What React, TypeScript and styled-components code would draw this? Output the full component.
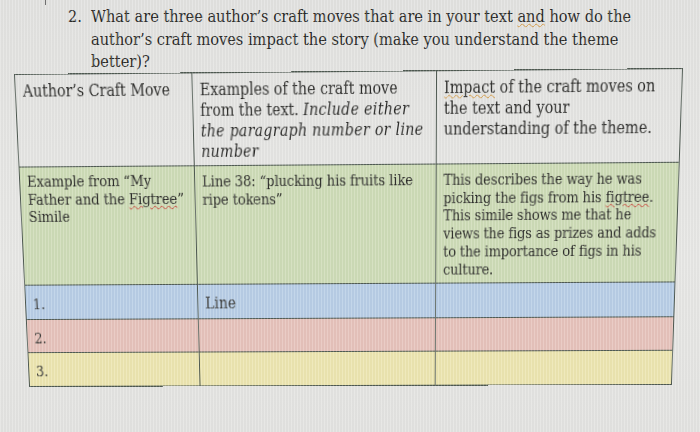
import styled, { createGlobalStyle } from 'styled-components'

// the photo was taken at an angle: the flat table is mapped onto the
// quad seen in the picture with a perspective matrix
const SHEET_TOP = 74
const FLAT = { x: 14, y: 0, w: 669, h: 311 }
const QUAD = [
  [14, 74],
  [683, 68],
  [672, 383],
  [29, 385],
].map(([x, y]) => [x, y - SHEET_TOP])

const perspectiveMatrix = (): string => {
  const [[x0, y0], [x1, y1], [x2, y2], [x3, y3]] = QUAD
  const dx1 = x1 - x2
  const dx2 = x3 - x2
  const dx3 = x0 - x1 + x2 - x3
  const dy1 = y1 - y2
  const dy2 = y3 - y2
  const dy3 = y0 - y1 + y2 - y3
  const den = dx1 * dy2 - dx2 * dy1
  const g = (dx3 * dy2 - dx2 * dy3) / den
  const h = (dx1 * dy3 - dx3 * dy1) / den
  const a = x1 - x0 + g * x1
  const b = x3 - x0 + h * x3
  const d = y1 - y0 + g * y1
  const e = y3 - y0 + h * y3
  const { x, y, w, h: H } = FLAT
  const A = a / w
  const B = b / H
  const C = x0 - (a * x) / w - (b * y) / H
  const D = d / w
  const E = e / H
  const F = y0 - (d * x) / w - (e * y) / H
  const G = g / w
  const Hh = h / H
  const I = 1 - (g * x) / w - (h * y) / H
  return `matrix3d(${A},${D},0,${G},${B},${E},0,${Hh},0,0,1,0,${C},${F},0,${I})`
}

const SERIF = `"DejaVu Serif Condensed", "DejaVu Serif", serif`

const GlobalStyle = createGlobalStyle`
  html, body {
    margin: 0;
    padding: 0;
    background: #e4e4e2;
  }
`

const Page = styled.div`
  position: relative;
  width: 700px;
  height: 432px;
  overflow: hidden;
  background: linear-gradient(180deg, #e2e2e0 0%, #e7e7e5 60%, #e3e3e1 100%);
  font-family: ${SERIF};
  font-stretch: condensed;
  color: #2a2a28;

  /* screen moiré from the photo */
  &::after {
    content: '';
    position: absolute;
    inset: 0;
    pointer-events: none;
    background: repeating-linear-gradient(
      90deg,
      rgba(255, 255, 255, 0.16) 0 1px,
      rgba(0, 0, 0, 0.015) 1px 3px
    );
  }
`

const Tick = styled.span`
  position: absolute;
  left: 45px;
  top: 0;
  width: 1px;
  height: 5px;
  background: #555;
`

const Question = styled.div`
  display: flex;
  padding: 6px 0 0 68px;
  height: 68px;
  font-size: 16.2px;
  line-height: 22.5px;
  white-space: nowrap;
`

const QNum = styled.span`
  width: 23px;
`

const Squiggle = styled.span<{ $tone: 'grammar' | 'spelling' }>`
  text-decoration: underline wavy ${(p) => (p.$tone === 'grammar' ? '#d49a45' : '#c8463a')};
  text-decoration-thickness: 1px;
  text-underline-offset: 1px;
`

const Sheet = styled.div`
  width: 700px;
  transform-origin: 0 0;
  transform: ${perspectiveMatrix()};
`

const Table = styled.div`
  margin-left: 14px;
  width: 669px;
  display: grid;
  grid-template-columns: 179px 245px 1fr;
  grid-template-rows: 90px 118px 35px 34px 34px;
  border: 1px solid #4f5a52;
  box-sizing: border-box;
`

const fills = {
  plain: 'transparent',
  green: '#cedcb7',
  blue: '#b8cee6',
  red: '#e6c3bb',
  yellow: '#ece5b0',
}

type Fill = keyof typeof fills

const Cell = styled.div<{ $fill: Fill; $last?: boolean; $bottom?: boolean }>`
  background: ${(p) => fills[p.$fill]};
  border-right: ${(p) => (p.$last ? 'none' : '1px solid #4f5a52')};
  border-bottom: ${(p) => (p.$bottom ? 'none' : '1px solid #4f5a52')};
  padding: 6px 4px 0 7px;
  white-space: nowrap;
  overflow: hidden;
`

const HeadText = styled.div<{ $size: number }>`
  font-size: ${(p) => p.$size}px;
  line-height: 20px;

  & i {
    letter-spacing: 0.3px;
  }
`

const BodyText = styled.div<{ $size: number }>`
  font-size: ${(p) => p.$size}px;
  line-height: 17.7px;
  letter-spacing: -0.1px;
`

const RowText = styled.div<{ $size: number }>`
  font-size: ${(p) => p.$size}px;
  line-height: 20px;
  padding-top: 3px;
  color: #383836;
`

const rows: { fill: Fill; label: string; example: string }[] = [
  { fill: 'blue', label: '1.', example: 'Line' },
  { fill: 'red', label: '2.', example: '' },
  { fill: 'yellow', label: '3.', example: '' },
]

export default function App(): JSX.Element {
  return (
    <Page>
      <GlobalStyle />
      <Tick />
      <Question>
        <QNum>2.</QNum>
        <div>
          What are three author’s craft moves that are in your text{' '}
          <Squiggle $tone="grammar">and</Squiggle> how do the
          <br />
          author’s craft moves impact the story (make you understand the theme
          <br />
          better)?
        </div>
      </Question>

      <Sheet>
        <Table>
          <Cell $fill="plain">
            <HeadText $size={16}>Author’s Craft Move</HeadText>
          </Cell>
          <Cell $fill="plain">
            <HeadText $size={15.9}>
              Examples of the craft move
              <br />
              from the text. <i>Include either</i>
              <br />
              <i>the paragraph number or line</i>
              <br />
              <i>number</i>
            </HeadText>
          </Cell>
          <Cell $fill="plain" $last>
            <HeadText $size={16}>
              <Squiggle $tone="grammar">Impact</Squiggle> of the craft moves on
              <br />
              the text and your
              <br />
              understanding of the theme.
            </HeadText>
          </Cell>

          <Cell $fill="green">
            <BodyText $size={15}>
              Example from “My
              <br />
              Father and the <Squiggle $tone="spelling">Figtree</Squiggle>”
              <br />
              Simile
            </BodyText>
          </Cell>
          <Cell $fill="green">
            <BodyText $size={14.8}>
              Line 38: “plucking his fruits like
              <br />
              ripe tokens”
            </BodyText>
          </Cell>
          <Cell $fill="green" $last>
            <BodyText $size={14.6}>
              This describes the way he was
              <br />
              picking the figs from his <Squiggle $tone="spelling">figtree</Squiggle>.
              <br />
              This simile shows me that he
              <br />
              views the figs as prizes and adds
              <br />
              to the importance of figs in his
              <br />
              culture.
            </BodyText>
          </Cell>

          {rows.map((row, i) => {
            const bottom = i === rows.length - 1
            return [
              <Cell key={`${row.label}-a`} $fill={row.fill} $bottom={bottom}>
                <RowText $size={15}>{row.label}</RowText>
              </Cell>,
              <Cell key={`${row.label}-b`} $fill={row.fill} $bottom={bottom}>
                <RowText $size={16}>{row.example}</RowText>
              </Cell>,
              <Cell key={`${row.label}-c`} $fill={row.fill} $bottom={bottom} $last />,
            ]
          })}
        </Table>
      </Sheet>
    </Page>
  )
}
